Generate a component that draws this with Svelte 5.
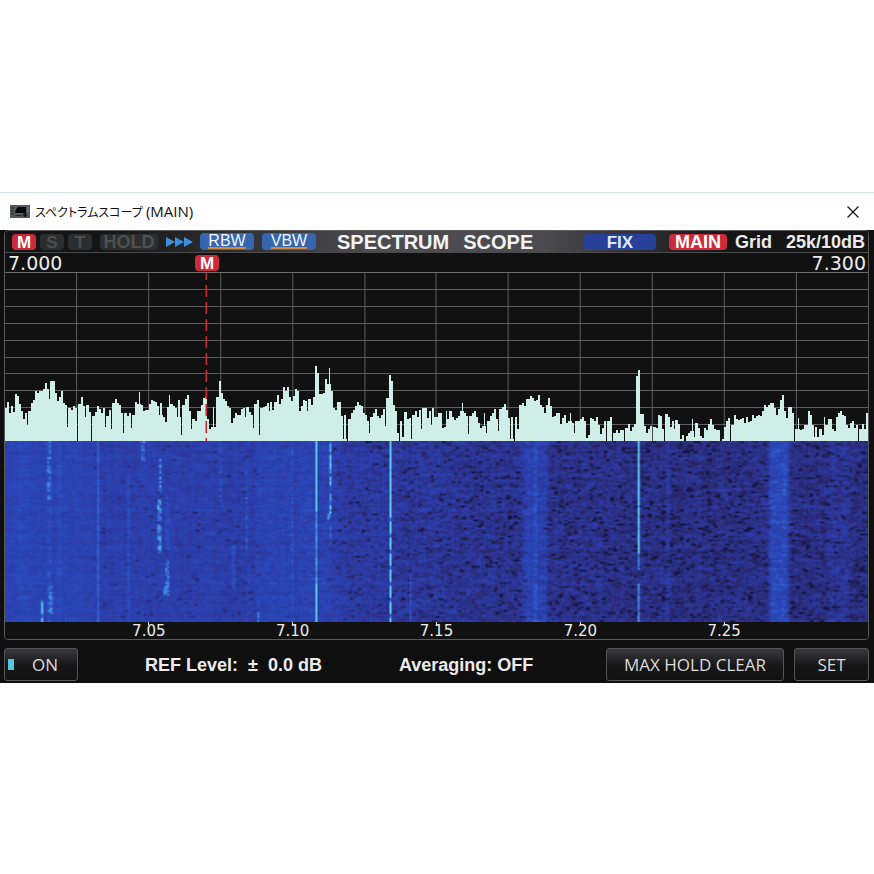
<script>
  import { onMount } from 'svelte'

  const TRACE_WIDTH = 862
  const TRACE_HEIGHT = 168
  const STEP = 2

  // trace levels in px above the baseline, one sample every 2px
  const SEGMENTS = [
    { x: 0, levels: [
      33, 39, 28, 35, 29, 47, 45, 37, 30, 22, 28, 16, 30, 38, 41, 50, 48, 50, 50, 52,
      58, 52, 42, 60, 60, 48, 40, 44, 50, 38, 36, 14, 33, 31, 35, 33, 0, 37, 44, 35,
      24, 36, 29, 0, 25, 29, 35, 32, 28, 33, 14, 25, 31, 12, 38, 42, 38, 36, 28, 8,
      28, 25, 28, 13, 26, 39, 37, 49, 36, 30, 31, 31, 37, 41, 40, 39, 35, 26, 38, 24,
      19, 34, 46, 37, 35, 33, 24, 41, 6, 36, 42, 46, 30, 12, 22, 20, 30, 30, 36, 43,
      44, 22, 12, 14, 34, 14, 44
    ] },
    { x: 214, levels: [
      60, 48, 42, 40, 35, 33, 18, 23, 28, 26, 26, 32, 33, 24, 34, 29, 26, 13, 37, 41,
      6, 33, 34, 35, 38, 30, 39, 31, 39, 46, 37, 42, 54, 50, 54, 44, 40, 45, 52, 50,
      30, 35, 41, 40, 30, 42, 36, 44, 75, 68, 47, 47, 48, 62, 57, 73, 50, 33, 31, 39,
      39, 25, 2, 26, 0, 22, 28, 31, 35, 39, 36, 35, 28, 26, 20, 8, 24, 28, 32, 25,
      23, 26, 32, 15, 43, 66, 60, 36, 30, 8, 0, 20, 4, 29, 22, 23, 2, 26, 30, 24,
      31, 12, 33, 33, 23, 30, 16, 33, 24, 28
    ] },
    { x: 434, levels: [
      28, 13, 14, 30, 22, 30, 24, 21, 23, 25, 30, 38, 28, 25, 7, 25, 28, 30, 24, 18,
      13, 15, 28, 8, 20, 25, 28, 32, 22, 10, 32, 34, 37, 31, 23, 2, 24, 0, 24, 12,
      36, 38, 35, 42, 42, 45, 43, 40, 41, 46, 36, 34, 28, 36, 43, 35, 24, 25, 28, 28,
      17, 23, 26, 18, 20, 28, 18, 8, 20, 20, 22, 24, 20, 3, 6, 23, 22, 20, 24, 16,
      7, 13, 20, 0, 20, 24, 0, 8, 11, 8, 11, 11, 0, 13, 17, 10, 14, 17, 65, 71,
      27, 27, 15, 8, 12, 15, 0, 14, 13, 26
    ] },
    { x: 654, levels: [
      25, 12, 0, 27, 24, 14, 20, 12, 21, 17, 2, 6, 0, 5, 8, 10, 22, 4, 18, 13,
      5, 3, 13, 11, 17, 22, 16, 12, 11, 11, 0, 2, 14, 20, 23, 0, 16, 26, 22, 21,
      22, 23, 18, 24, 19, 20, 26, 23, 25, 26, 25, 30, 36, 34, 36, 38, 38, 33, 26, 32,
      41, 46, 30, 23, 34, 34, 28, 0, 12, 23, 11, 12, 16, 16, 30, 26, 16, 4, 14, 4,
      12, 6, 24, 16, 22, 22, 12, 10, 24, 28, 30, 26, 25, 16, 13, 18, 20, 13, 16, 0,
      12, 17, 12, 28
    ] }
  ]

  const verticals = Array.from({ length: 11 }, (_, i) => Math.round((i + 1) * 71.9) - 0.5)
  const horizontals = Array.from({ length: 9 }, (_, i) => Math.round((i + 1) * 16.9) - 0.5)
  const ticks = ['7.05', '7.10', '7.15', '7.20', '7.25']

  function buildTrace() {
    let d = `M0 ${TRACE_HEIGHT}`
    for (const { x, levels } of SEGMENTS) {
      levels.forEach((level, i) => {
        const left = x + i * STEP
        const prev = levels[i - 1] ?? level
        const next = levels[i + 1] ?? level
        d += `V${TRACE_HEIGHT - level}`
        // notches and spikes are only one pixel wide
        if (prev - level > 7 && next - level > 7) {
          d += `H${left + 1}V${TRACE_HEIGHT - next}`
        } else if (level - prev > 7 && level - next > 7) {
          d += `H${left + 1}V${TRACE_HEIGHT - Math.max(prev, next)}`
        }
        d += `H${left + STEP}`
      })
    }
    return `${d}V${TRACE_HEIGHT}Z`
  }

  const trace = buildTrace()

  // x, from, to, strength, pattern
  const SIGNALS = [
    [15, 0, 1, 0.06, 'solid'],
    [36, 0.87, 1, 0.9, 'dash'],
    [43, 0, 0.32, 0.5, 'noisy'],
    [43, 0.32, 1, 0.2, 'noisy'],
    [45, 0.8, 0.95, 0.5, 'noisy'],
    [53, 0, 1, 0.08, 'solid'],
    [92, 0, 1, 0.3, 'solid'],
    [122, 0.18, 1, 0.18, 'solid'],
    [137, 0, 0.1, 0.6, 'noisy'],
    [154, 0.1, 0.28, 0.9, 'noisy'],
    [153, 0.32, 0.62, 0.8, 'noisy'],
    [161, 0.3, 0.6, 0.15, 'solid'],
    [161, 0.65, 0.85, 0.7, 'noisy'],
    [158, 0.79, 0.85, 0.7, 'noisy'],
    [214, 0, 0.33, 0.3, 'noisy'],
    [227, 0.57, 0.8, 0.16, 'solid'],
    [240, 0.1, 0.6, 0.25, 'noisy'],
    [252, 0.94, 1, 0.35, 'solid'],
    [286, 0, 1, 0.18, 'noisy'],
    [310, 0, 0.38, 1, 'solid'],
    [310, 0.38, 0.78, 0.5, 'solid'],
    [310, 0.78, 1, 1, 'solid'],
    [324, 0, 0.43, 1, 'noisy'],
    [322, 0.4, 0.43, 0.6, 'solid'],
    [324, 0.46, 0.56, 0.35, 'noisy'],
    [384, 0, 0.42, 1.1, 'solid'],
    [384, 0.42, 1, 1.1, 'dash'],
    [404, 0.74, 1, 0.25, 'solid'],
    [529, 0, 1, 0.1, 'solid'],
    [632, 0, 0.62, 1.1, 'solid'],
    [632, 0.62, 0.7, 0.6, 'solid'],
    [632, 0.78, 1, 0.7, 'solid'],
    [661, 0, 1, 0.1, 'solid']
  ]

  // x centre, half width, gain
  const BANDS = [
    [36, 60, 0.06],
    [290, 50, 0.08],
    [529, 16, 0.18],
    [772, 13, 0.3],
    [832, 14, 0.08]
  ]

  let waterfall

  function random(seed) {
    let s = seed
    return () => {
      s = (s * 1664525 + 1013904223) >>> 0
      return s / 4294967296
    }
  }

  function smooth(v) {
    const c = Math.min(1, Math.max(0, v))
    return c * c * (3 - 2 * c)
  }

  function floorLevel(x) {
    // noise floor falls towards the upper band edge
    let level = 0.44 - 0.19 * smooth((x - 130) / 560)
    for (const [cx, half, gain] of BANDS) {
      const edge = Math.min(30, half / 2)
      level += gain * smooth((half - Math.abs(x - cx)) / edge)
    }
    return level
  }

  const PALETTE = [
    [0, [20, 20, 58]],
    [0.18, [43, 42, 116]],
    [0.4, [44, 60, 168]],
    [0.6, [42, 76, 190]],
    [0.85, [57, 118, 218]],
    [1.3, [92, 205, 242]]
  ]

  function colour(level) {
    const v = Math.min(1.3, Math.max(0, level))
    for (let i = 1; i < PALETTE.length; i++) {
      const [hi, b] = PALETTE[i]
      if (v <= hi) {
        const [lo, a] = PALETTE[i - 1]
        const t = (v - lo) / (hi - lo)
        return a.map((c, n) => c + (b[n] - c) * t)
      }
    }
    return PALETTE[PALETTE.length - 1][1]
  }

  function drawWaterfall() {
    const ctx = waterfall.getContext('2d')
    const { width, height } = waterfall
    const image = ctx.createImageData(width, height)
    const rnd = random(7300)
    const columns = Array.from({ length: width }, () => (rnd() - 0.5) * 0.05)

    for (let y = 0; y < height; y++) {
      const pos = y / height
      const row = (rnd() - 0.5) * 0.06
      let grain = 0
      let speck = 0
      for (let x = 0; x < width; x++) {
        const px = x * STEP
        const base = floorLevel(px)
        grain = grain * 0.45 + (rnd() - 0.5) * 0.24
        const quiet = smooth((px - 80) / 450)
        let level = base + columns[x] + row + grain * (0.6 + quiet * 0.4)
        if (base < 0.46 && rnd() < 0.01 + quiet * 0.05) speck = 2
        if (speck > 0) {
          level -= 0.2
          speck -= 1
        }

        for (const [sx, from, to, strength, pattern] of SIGNALS) {
          if (Math.abs(px - sx) > 1 || pos < from || pos > to) continue
          if (pattern === 'dash' && y % 8 > 5) level += strength * 0.3
          else if (pattern === 'noisy') level += strength * rnd()
          else level += strength
        }

        const [r, g, b] = colour(level)
        const o = (y * width + x) * 4
        image.data[o] = r
        image.data[o + 1] = g
        image.data[o + 2] = b
        image.data[o + 3] = 255
      }
    }
    ctx.putImageData(image, 0, 0)
  }

  onMount(drawWaterfall)
</script>

<main class="window">
  <header class="titlebar">
    <svg class="app-icon" viewBox="0 0 20 13" aria-hidden="true">
      <rect width="20" height="13" fill="#55585d" />
      <path d="M6 4l2-2h8v6H5z" fill="#08090b" />
      <path d="M1 3h3M1 6h3M1 9h3M5 10.500h7" stroke="#24272b" />
      <circle cx="15" cy="10" r="2" fill="#181a1d" />
      <path d="M17 3h2M17 6h2" stroke="#92969b" />
    </svg>
    <h1>スペクトラムスコープ <span>(MAIN)</span></h1>
    <button class="close" aria-label="Close">
      <svg viewBox="0 0 12 12" aria-hidden="true">
        <path d="M0.5 0.5l11 11M11.5 0.5l-11 11" stroke="#111" stroke-width="1.2" />
      </svg>
    </button>
  </header>

  <section class="scope">
    <div class="display">
      <div class="status">
        <span class="badge red">M</span>
        <span class="badge dim">S</span>
        <span class="badge dim">T</span>
        <span class="badge dim hold">HOLD</span>
        <svg class="arrows" viewBox="0 0 27 10" aria-hidden="true">
          <path d="M0 0l9 5-9 5zM9 0l9 5-9 5zM18 0l9 5-9 5z" fill="#3b8fdc" />
        </svg>
        <span class="badge filter"><span>RBW</span></span>
        <span class="badge filter"><span>VBW</span></span>
        <h2><span>SPECTRUM</span><span>SCOPE</span></h2>
        <span class="badge fix">FIX</span>
        <span class="badge red receiver">MAIN</span>
        <span class="grid-info"><span>Grid</span><span>25k/10dB</span></span>
      </div>

      <div class="edges">
        <span>7.000</span>
        <span class="badge red marker">M</span>
        <span>7.300</span>
      </div>

      <svg class="spectrum" viewBox="0 0 {TRACE_WIDTH} {TRACE_HEIGHT}" preserveAspectRatio="none">
        <g stroke="#5e5e5e" stroke-width="1">
          {#each verticals as x}
            <line x1={x} x2={x} y1="0" y2={TRACE_HEIGHT} />
          {/each}
          {#each horizontals as y}
            <line x1="0" x2={TRACE_WIDTH} y1={y} y2={y} />
          {/each}
        </g>
        <path d={trace} fill="#d0eee8" shape-rendering="crispEdges" />
        <line x1="201" x2="201" y1="0" y2={TRACE_HEIGHT} stroke="#cb2731" stroke-width="1.5" stroke-dasharray="12 5" stroke-dashoffset="5" />
      </svg>

      <canvas class="waterfall" bind:this={waterfall} width="431" height="90"></canvas>

      <div class="ruler">
        {#each ticks as tick}
          <span>{tick}</span>
        {/each}
      </div>
    </div>

    <footer class="controls">
      <button class="key on"><i></i>ON</button>
      <p class="level"><span>REF Level:</span><span>±</span><span>0.0 dB</span></p>
      <p class="average">Averaging: OFF</p>
      <button class="key clear">MAX HOLD CLEAR</button>
      <button class="key set">SET</button>
    </footer>
  </section>
</main>

<style>
  :global(body) {
    margin: 0;
    background: #fff;
  }

  .window {
    padding-top: 192px;
    font-family: 'Liberation Sans', Arial, sans-serif;
  }

  h1, h2, p {
    margin: 0;
  }

  .titlebar {
    display: flex;
    align-items: center;
    box-sizing: border-box;
    height: 38px;
    padding: 0 15px 0 10px;
    border-top: 1px solid #d3e9e6;
    background: #fff;
  }

  .app-icon {
    width: 20px;
    height: 13px;
    margin-right: 5px;
  }

  .titlebar h1 {
    flex: 1;
    font: 400 12px/20px 'Open Sans', 'Noto Sans CJK JP', sans-serif;
    font-feature-settings: 'palt';
    color: #111;
  }

  .titlebar h1 span {
    font-size: 15px;
  }

  .close {
    display: flex;
    padding: 0;
    border: 0;
    background: none;
  }

  .close svg {
    width: 12px;
    height: 12px;
  }

  .scope {
    padding: 0 5px 0 4px;
    background: #0f0f10;
    color: #ececec;
  }

  .display {
    overflow: hidden;
    border: 1px solid #5a5a5c;
    border-radius: 4px;
    background: #111112;
  }

  .status {
    display: flex;
    align-items: center;
    height: 21px;
    padding: 0 3px 0 7px;
    border-bottom: 1px solid #4b4b4d;
    background: linear-gradient(90deg, #151516 12%, #4c4c50 42%, #4c4c50 62%, #151516 84%);
  }

  .badge {
    box-sizing: border-box;
    height: 16px;
    min-width: 24px;
    border-radius: 4px;
    font-size: 17px;
    font-weight: 700;
    line-height: 17px;
    text-align: center;
  }

  .red {
    background: #cb2a3a;
    color: #fff;
  }

  .dim {
    margin-left: 4px;
    background: #2c2d2e;
    color: #4f5151;
  }

  .hold {
    width: 58px;
    margin-left: 8px;
    font-size: 18px;
  }

  .arrows {
    width: 27px;
    height: 10px;
    margin: 0 7px 0 8px;
  }

  .filter {
    width: 54px;
    height: 17px;
    background: #3566ae;
    color: #f2f5fa;
    font-size: 16px;
    font-weight: 400;
    line-height: 15px;
  }

  .filter + .filter {
    margin-left: 8px;
  }

  .filter span {
    display: inline-block;
    height: 14px;
    border-bottom: 2px solid #d08a3e;
  }

  .status h2 {
    display: flex;
    gap: 14px;
    margin-left: 21px;
    font-size: 20px;
    line-height: 22px;
    color: #f4f4f4;
  }

  .fix {
    width: 72px;
    margin-left: auto;
    background: #27419a;
    color: #dfe9f7;
  }

  .receiver {
    width: 58px;
    margin: 0 8px 0 13px;
    font-size: 18px;
  }

  .grid-info {
    display: flex;
    gap: 14px;
    font-size: 18px;
    font-weight: 700;
    line-height: 22px;
  }

  .edges {
    display: grid;
    grid-template-columns: 187px 24px 1fr;
    align-items: center;
    height: 19px;
    padding: 0 2px 0 3px;
    border-bottom: 1px solid #6c6c6c;
    font: 19px/20px 'DejaVu Sans', sans-serif;
  }

  .edges .marker {
    font-family: 'Liberation Sans', Arial, sans-serif;
  }

  .edges > :last-child {
    text-align: right;
  }

  .spectrum {
    display: block;
    width: 100%;
    height: 168px;
  }

  .waterfall {
    display: block;
    width: 100%;
    height: 181px;
  }

  .ruler {
    display: grid;
    grid-template-columns: repeat(5, 1fr);
    height: 17px;
    /* half a division is left free on both sides */
    padding: 0 calc(100% / 12);
    font: 15px/19px 'DejaVu Sans', sans-serif;
    text-align: center;
    background: #111112;
  }

  .ruler span {
    background: linear-gradient(#fff, #fff) center top / 1px 3px no-repeat;
  }

  .controls {
    display: flex;
    align-items: center;
    height: 33px;
    padding: 8px 0 2px;
    font-size: 18px;
    font-weight: 700;
    line-height: 20px;
  }

  .key {
    box-sizing: border-box;
    height: 33px;
    padding: 0;
    border: 1px solid #555558;
    border-radius: 3px;
    background: linear-gradient(#39393c, #161617 55%, #111112);
    color: #dcdcdc;
    font: 500 17px/20px 'Open Sans', sans-serif;
  }

  .on {
    display: flex;
    align-items: center;
    width: 74px;
    padding-left: 3px;
  }

  .on i {
    width: 6px;
    height: 11px;
    margin-right: 18px;
    background: #55c5df;
  }

  .level {
    display: flex;
    gap: 10px;
    margin-left: 67px;
  }

  .average {
    margin: 0 auto 0 77px;
  }

  .clear {
    width: 178px;
  }

  .set {
    width: 75px;
    margin-left: 10px;
  }
</style>
